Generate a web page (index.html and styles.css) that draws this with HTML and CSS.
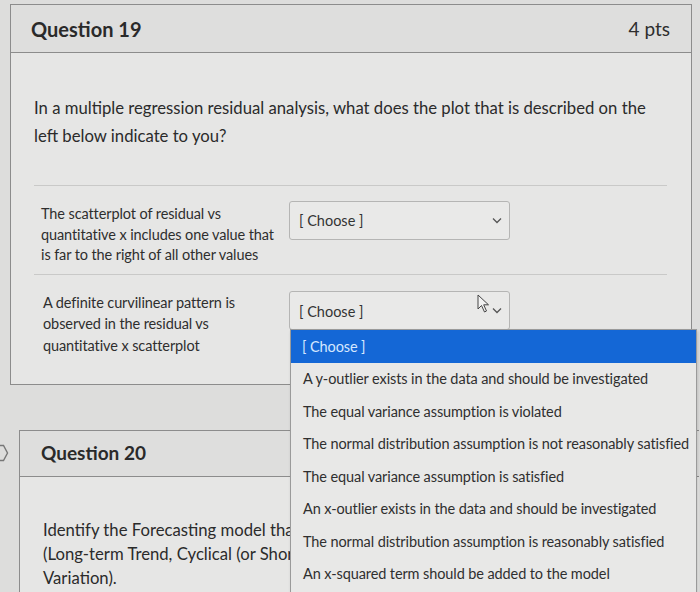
FILE: index.html
```html
<!DOCTYPE html>
<html>
<head>
<meta charset="utf-8">
<link rel="stylesheet" href="styles.css">
</head>
<body>
<div class="page">
  <section class="card q19">
    <header class="card-head">
      <h2 class="q-title">Question 19</h2>
      <span class="pts">4 pts</span>
    </header>
    <div class="card-body">
      <p class="q-text">In a multiple regression residual analysis, what does the plot that is described on the left below indicate to you?</p>
      <div class="match-row r1">
        <div class="prompt">The scatterplot of residual vs quantitative x includes one value that is far to the right of all other values</div>
        <div class="select"><span>[ Choose ]</span><svg class="chev" width="10" height="7" viewBox="0 0 10 7"><path d="M1 1.5 L5 5.5 L9 1.5" fill="none" stroke="#555" stroke-width="1.3"/></svg></div>
      </div>
      <div class="match-row r2">
        <div class="prompt p2">A definite curvilinear pattern is observed in the residual vs quantitative x scatterplot</div>
        <div class="select open"><span>[ Choose ]</span><svg class="chev" width="10" height="7" viewBox="0 0 10 7"><path d="M1 1.5 L5 5.5 L9 1.5" fill="none" stroke="#555" stroke-width="1.3"/></svg>
          <svg class="cursor" width="14" height="20" viewBox="0 0 14 20"><path d="M1 1 L1 15 L4.5 11.5 L7.5 18 L9.5 17 L6.7 10.8 L11.5 10.8 Z" fill="#f2f2f2" stroke="#444" stroke-width="1"/></svg>
        </div>
      </div>
    </div>
  </section>

  <div class="q20-wrap">
    <svg class="flag" width="12" height="22" viewBox="0 0 12 22"><path d="M-2 3.5 L3.5 3.5 L7.5 11 L3.5 18.5 L-2 18.5" fill="none" stroke="#777" stroke-width="1.4"/></svg>
    <section class="card q20">
      <header class="card-head h20">
        <h2 class="q-title">Question 20</h2>
      </header>
      <div class="card-body b20">
        <p class="q-text t20">Identify the Forecasting model that best fits the data<br>(Long-term Trend, Cyclical (or Short-term Fluctuation), Seasonal, or Irregular<br>Variation).</p>
      </div>
    </section>
  </div>

  <ul class="dropdown">
    <li class="sel">[ Choose ]</li>
    <li>A y-outlier exists in the data and should be investigated</li>
    <li>The equal variance assumption is violated</li>
    <li>The normal distribution assumption is not reasonably satisfied</li>
    <li>The equal variance assumption is satisfied</li>
    <li>An x-outlier exists in the data and should be investigated</li>
    <li>The normal distribution assumption is reasonably satisfied</li>
    <li>An x-squared term should be added to the model</li>
  </ul>
</div>
</body>
</html>
```

FILE: styles.css
```css
html, body {
  margin: 0;
  padding: 0;
}
body {
  background: #dddddc;
  font-family: Lato, "Open Sans", sans-serif;
  color: #2b2b2b;
  width: 700px;
  height: 592px;
  overflow: hidden;
}
.page {
  position: relative;
  width: 700px;
  height: 592px;
  overflow: hidden;
  padding-top: 4px;
  box-sizing: border-box;
}
.card {
  border: 1px solid #8c8c8c;
  background: #e6e6e5;
  box-sizing: border-box;
}
.q19 {
  margin-left: 10px;
  width: 682px;
  height: 381px;
}
.card-head {
  height: 48px;
  box-sizing: border-box;
  background: #dededd;
  border-bottom: 1px solid #8c8c8c;
  display: flex;
  align-items: center;
  justify-content: space-between;
  padding: 0 21px 0 20px;
}
.q-title {
  margin: 0;
  font-size: 20px;
  font-weight: 700;
  color: #2a2a2a;
}
.pts {
  font-size: 19px;
  color: #2e2e2e;
}
.card-body {
  padding: 41px 22px 0 23px;
}
.q-text {
  margin: 0;
  font-size: 16.7px;
  line-height: 28px;
  color: #2b2b2b;
}
.match-row {
  display: flex;
  gap: 8px;
  border-top: 1px solid #c9c9c8;
  margin-right: 2px;
}
.r1 {
  margin-top: 35px;
  padding: 15px 0 8px 7px;
}
.r1 .prompt {
  margin-top: 3px;
}
.r2 {
  padding: 17px 0 0 9px;
}
.prompt {
  width: 240px;
  font-size: 14.5px;
  line-height: 20.5px;
  letter-spacing: -0.1px;
  color: #2e2e2e;
}
.p2 {
  width: 238px;
  line-height: 21.5px;
}
.select {
  position: relative;
  width: 221px;
  height: 39px;
  box-sizing: border-box;
  border: 1px solid #b5b5b4;
  border-radius: 3px;
  background: #e9e9e8;
  display: flex;
  align-items: center;
  justify-content: space-between;
  padding: 0 7px 0 9px;
  font-size: 14.5px;
  color: #333;
}
.r2 .select {
  margin-top: -1px;
}
.open span {
  position: relative;
  top: 1px;
}
.chev {
  display: block;
}
.cursor {
  position: absolute;
  left: 187px;
  top: 2px;
}
.q20-wrap {
  display: flex;
  margin-top: 45px;
}
.flag {
  width: 12px;
  margin-top: 12px;
  margin-right: 7px;
  flex: none;
}
.q20 {
  width: 680px;
  height: 200px;
  border-right: none;
}
.h20 {
  height: 46px;
  padding-left: 21px;
  padding-bottom: 3px;
}
.h20 .q-title {
  font-size: 19px;
  font-weight: 700;
}
.b20 {
  padding: 41px 0 0 23px;
  white-space: nowrap;
}
.t20 {
  line-height: 24px;
}
.dropdown {
  position: absolute;
  left: 290px;
  top: 329px;
  width: 407px;
  margin: 0;
  padding: 0 0 2px 0;
  list-style: none;
  background: #e8e8e7;
  border: 1px solid #9a9a9a;
  box-sizing: border-box;
  box-shadow: 1px 2px 3px rgba(0,0,0,0.15);
}
.dropdown li {
  height: 32.5px;
  line-height: 32.5px;
  padding-left: 12px;
  font-size: 14.5px;
  letter-spacing: -0.1px;
  color: #2f2f2f;
  white-space: nowrap;
}
.dropdown li.sel {
  height: 33px;
  line-height: 33px;
  background: #1467d6;
  color: #d6e7ff;
  padding-left: 11px;
}
```
